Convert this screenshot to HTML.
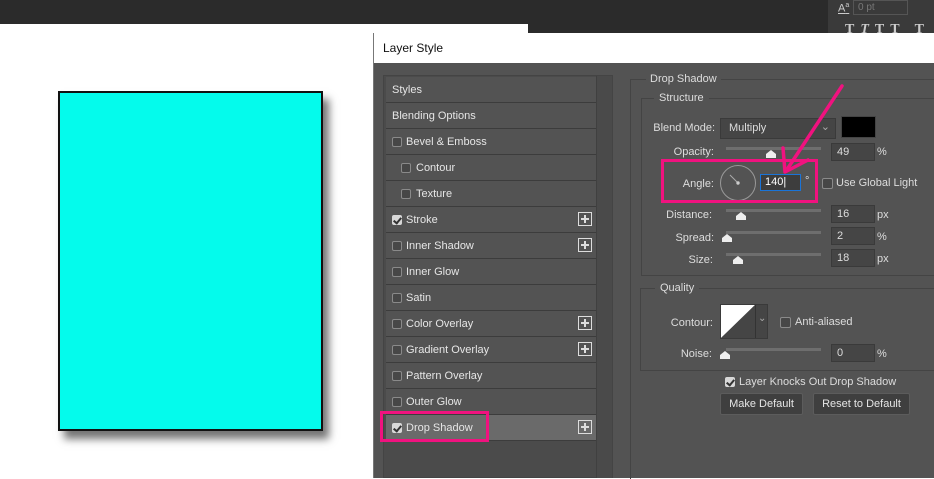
<!DOCTYPE html><html><head><style>
*{margin:0;padding:0;box-sizing:border-box}
body{width:934px;height:478px;overflow:hidden;background:#fff;position:relative;font-family:"Liberation Sans",sans-serif;font-size:11px;color:#e6e6e6}
.a{position:absolute}
.row{position:absolute;left:386px;width:210px;height:26px;border-bottom:1px solid #3c3c3c;background:#535353;line-height:27px}
.row span{position:absolute;left:20px}
.cb{position:absolute;width:10px;height:10px;border:1px solid #8a8a8a;border-radius:2px;background:#474747}
.cbk{background:#d8d8d8;border-color:#d8d8d8}
.cbk:after{content:"";position:absolute;left:2px;top:0px;width:3px;height:6px;border:solid #333;border-width:0 2px 2px 0;transform:rotate(40deg)}
.plus{position:absolute;left:192px;top:5px;width:14px;height:14px;border:1px solid #ddd;}
.plus:before{content:"";position:absolute;left:2px;top:5px;width:8px;height:2px;background:#ddd}
.plus:after{content:"";position:absolute;left:5px;top:2px;width:2px;height:8px;background:#ddd}
.lbl{position:absolute;text-align:right;color:#ddd}
.inp{position:absolute;background:#454545;border:1px solid #3a3a3a;color:#ddd;padding-left:5px;line-height:16px}
.sl{position:absolute;height:3px;background:#6e6e6e}
.th{position:absolute;width:0;height:0}
.th:before{content:"";position:absolute;left:-5px;top:0;width:10px;height:8px;background:#eee;clip-path:polygon(50% 0,100% 50%,100% 100%,0 100%,0 50%)}
.btn{position:absolute;height:22px;background:#3f3f3f;border:1px solid #5c5c5c;border-radius:2px;text-align:center;line-height:20px;color:#e6e6e6}
</style></head><body>
<div class="a" style="left:0;top:0;width:934px;height:24px;background:#2b2b2b"></div>
<div class="a" style="left:528px;top:24px;width:406px;height:9px;background:#2b2b2b"></div>
<div class="a" style="left:828px;top:0;width:106px;height:33px;background:#3a3a3a"></div>
<div class="a" style="left:838px;top:2px;color:#ccc;font-size:11px;text-decoration:underline">A<sup style="font-size:7px">a</sup></div>
<div class="a" style="left:853px;top:0;width:55px;height:15px;border:1px solid #555;color:#777;padding-left:4px;font-size:10px;line-height:13px">0 pt</div>
<div class="a" style="left:845px;top:22px;color:#ccc;font-family:'Liberation Serif';font-size:14px;font-weight:bold;letter-spacing:6px">T<i>T</i>TT T</div>
<div class="a" style="left:58px;top:91px;width:265px;height:340px;background:#04fbec;border:2px solid #111;box-shadow:6px 8px 8px rgba(0,0,0,.55)"></div>
<div class="a" style="left:373px;top:33px;width:561px;height:445px;background:#535353;border-left:1px solid #777"></div>
<div class="a" style="left:374px;top:33px;width:560px;height:30px;background:#fff;color:#111;font-size:12px;line-height:30px;padding-left:9px">Layer Style</div>
<div class="a" style="left:383px;top:75px;width:230px;height:403px;border:1px solid #444;background:#4b4b4b"></div>
<div class="a" style="left:596px;top:76px;width:16px;height:402px;background:#4a4a4a;border-left:1px solid #404040"></div>
<div class="row" style="top:77px"><span style="left:6px">Styles</span></div>
<div class="row" style="top:103px"><span style="left:6px">Blending Options</span></div>
<div class="row" style="top:129px"><div class="cb" style="left:6px;top:8px"></div><span>Bevel &amp; Emboss</span></div>
<div class="row" style="top:155px"><div class="cb" style="left:15px;top:8px"></div><span style="left:30px">Contour</span></div>
<div class="row" style="top:181px"><div class="cb" style="left:15px;top:8px"></div><span style="left:30px">Texture</span></div>
<div class="row" style="top:207px"><div class="cb cbk" style="left:6px;top:8px"></div><span>Stroke</span><div class="plus"></div></div>
<div class="row" style="top:233px"><div class="cb" style="left:6px;top:8px"></div><span>Inner Shadow</span><div class="plus"></div></div>
<div class="row" style="top:259px"><div class="cb" style="left:6px;top:8px"></div><span>Inner Glow</span></div>
<div class="row" style="top:285px"><div class="cb" style="left:6px;top:8px"></div><span>Satin</span></div>
<div class="row" style="top:311px"><div class="cb" style="left:6px;top:8px"></div><span>Color Overlay</span><div class="plus"></div></div>
<div class="row" style="top:337px"><div class="cb" style="left:6px;top:8px"></div><span>Gradient Overlay</span><div class="plus"></div></div>
<div class="row" style="top:363px"><div class="cb" style="left:6px;top:8px"></div><span>Pattern Overlay</span></div>
<div class="row" style="top:389px"><div class="cb" style="left:6px;top:8px"></div><span>Outer Glow</span></div>
<div class="row" style="top:415px;background:#6a6a6a"><div class="cb cbk" style="left:6px;top:8px"></div><span>Drop Shadow</span><div class="plus"></div></div>
<div class="a" style="left:380px;top:411px;width:109px;height:31px;border:3px solid #f0127f"></div>
<div class="a" style="left:630px;top:79px;width:310px;height:400px;border-left:1px solid #444;border-top:1px solid #444"></div>
<div class="a" style="left:646px;top:73px;background:#535353;padding:0 4px;color:#ddd">Drop Shadow</div>
<div class="a" style="left:641px;top:98px;width:300px;height:178px;border:1px solid #444"></div>
<div class="a" style="left:654px;top:92px;background:#535353;padding:0 5px;color:#ddd">Structure</div>
<div class="lbl" style="left:650px;top:122px;width:65px">Blend Mode:</div>
<div class="a" style="left:720px;top:118px;width:116px;height:21px;background:#454545;border:1px solid #3a3a3a;color:#ddd;padding-left:8px;line-height:19px">Multiply<span style="position:absolute;right:5px;top:-1px;color:#aaa">&#8964;</span></div>
<div class="a" style="left:841px;top:116px;width:35px;height:22px;background:#000;border:1px solid #444"></div>
<div class="lbl" style="left:650px;top:146px;width:64px">Opacity:</div>
<div class="sl" style="left:726px;top:147px;width:95px"></div><div class="th" style="left:771px;top:150px"></div>
<div class="inp" style="left:831px;top:143px;width:44px;height:18px">49</div><div class="a" style="left:877px;top:146px;color:#ddd">%</div>
<div class="lbl" style="left:650px;top:178px;width:64px">Angle:</div>
<div class="a" style="left:720px;top:165px;width:36px;height:36px;border:1px solid #999;border-radius:50%"></div>
<svg class="a" style="left:720px;top:165px" width="36" height="36"><line x1="10" y1="10" x2="18" y2="18" stroke="#aaa" stroke-width="1"/><circle cx="18" cy="18" r="1.7" fill="#ccc"/></svg>
<div class="inp" style="left:760px;top:174px;width:41px;height:17px;border-color:#1a74d8;background:#3d3d3d;color:#fff;line-height:15px;padding-left:4px">140|</div>
<div class="a" style="left:805px;top:175px;color:#ddd">°</div>
<div class="cb" style="left:822px;top:178px;width:11px;height:11px"></div>
<div class="a" style="left:836px;top:177px;color:#ddd">Use Global Light</div>
<div class="a" style="left:661px;top:159px;width:157px;height:44px;border:3px solid #f0127f"></div>
<svg class="a" style="left:770px;top:80px" width="80" height="100"><line x1="72" y1="6" x2="18" y2="88" stroke="#f0127f" stroke-width="3.5" stroke-linecap="round"/><polyline points="13,68 15,92 38,80" fill="none" stroke="#f0127f" stroke-width="3.5" stroke-linejoin="round" stroke-linecap="round"/></svg>
<div class="lbl" style="left:650px;top:209px;width:62px">Distance:</div>
<div class="sl" style="left:726px;top:209px;width:95px"></div><div class="th" style="left:741px;top:212px"></div>
<div class="inp" style="left:831px;top:205px;width:44px;height:18px">16</div><div class="a" style="left:877px;top:209px;color:#ddd">px</div>
<div class="lbl" style="left:650px;top:232px;width:64px">Spread:</div>
<div class="sl" style="left:726px;top:231px;width:95px"></div><div class="th" style="left:727px;top:234px"></div>
<div class="inp" style="left:831px;top:227px;width:44px;height:18px">2</div><div class="a" style="left:877px;top:231px;color:#ddd">%</div>
<div class="lbl" style="left:650px;top:254px;width:63px">Size:</div>
<div class="sl" style="left:726px;top:253px;width:95px"></div><div class="th" style="left:738px;top:256px"></div>
<div class="inp" style="left:831px;top:249px;width:44px;height:18px">18</div><div class="a" style="left:877px;top:253px;color:#ddd">px</div>
<div class="a" style="left:640px;top:288px;width:300px;height:83px;border:1px solid #444"></div>
<div class="a" style="left:655px;top:282px;background:#535353;padding:0 5px;color:#ddd">Quality</div>
<div class="lbl" style="left:650px;top:317px;width:63px">Contour:</div>
<div class="a" style="left:720px;top:304px;width:48px;height:35px;border:1px solid #3a3a3a;background:#454545"></div>
<svg class="a" style="left:721px;top:305px" width="34" height="33"><polygon points="0,0 34,0 0,33" fill="#fff"/><polygon points="34,0 34,33 0,33" fill="#454545"/></svg>
<div class="a" style="left:755px;top:305px;width:1px;height:33px;background:#333"></div>
<div class="a" style="left:758px;top:313px;color:#aaa;font-size:10px">&#8964;</div>
<div class="cb" style="left:780px;top:317px;width:11px;height:11px"></div>
<div class="a" style="left:795px;top:316px;color:#ddd">Anti-aliased</div>
<div class="lbl" style="left:650px;top:348px;width:62px">Noise:</div>
<div class="sl" style="left:726px;top:348px;width:95px"></div><div class="th" style="left:725px;top:351px"></div>
<div class="inp" style="left:831px;top:344px;width:44px;height:18px">0</div><div class="a" style="left:877px;top:348px;color:#ddd">%</div>
<div class="cb cbk" style="left:725px;top:377px;width:10px;height:10px"></div>
<div class="a" style="left:739px;top:376px;color:#ddd">Layer Knocks Out Drop Shadow</div>
<div class="btn" style="left:720px;top:393px;width:83px">Make Default</div>
<div class="btn" style="left:813px;top:393px;width:97px">Reset to Default</div>
</body></html>
